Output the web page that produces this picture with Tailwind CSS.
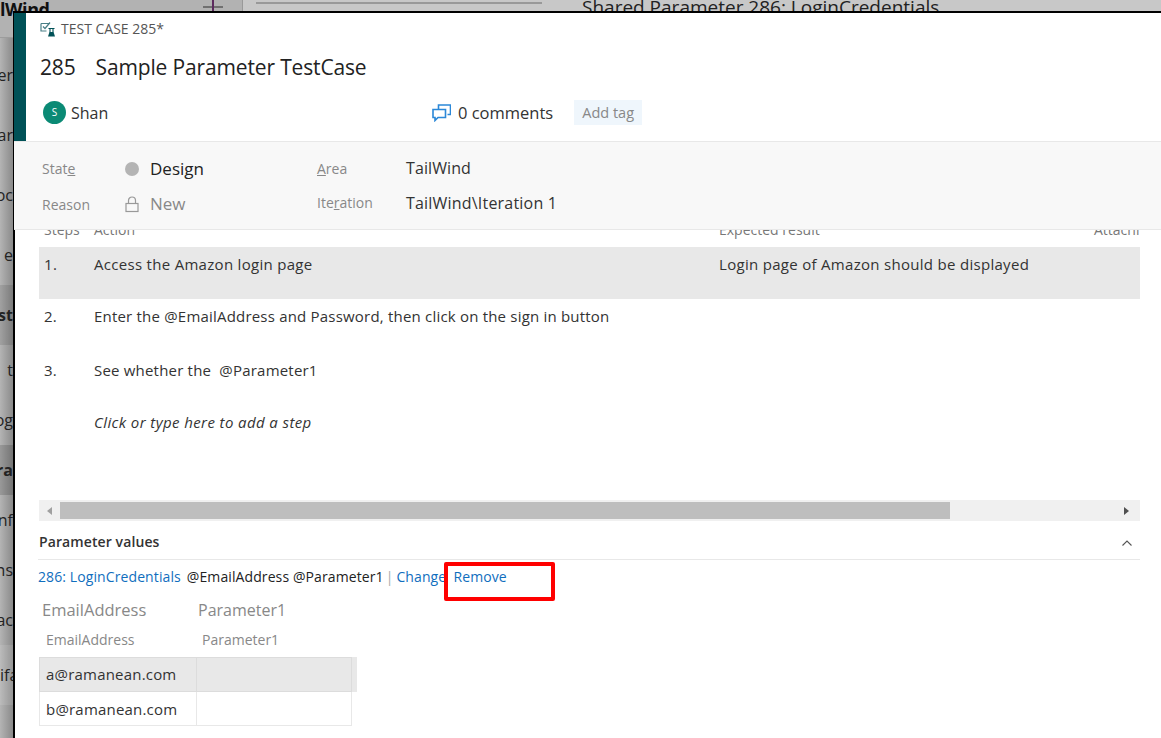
<!DOCTYPE html>
<html>
<head>
<meta charset="utf-8">
<script src="https://cdn.jsdelivr.net/npm/@tailwindcss/browser@4"></script>
</head>
<body class="bg-[#b4b4b4] overflow-hidden font-['Open_Sans','Noto_Sans',sans-serif]">
<div class="relative w-[1161px] h-[738px] overflow-hidden">

  <!-- dimmed page behind the dialog -->
  <div class="absolute inset-0 flex flex-col">
    <div class="flex h-[38px] shrink-0 border-b border-[#9c9c9c]">
      <div class="w-[243px] relative bg-[#b2b2b2] border-r border-[#999]">
        <span class="absolute left-0 -top-[3px] text-[18px] tracking-[-0.4px] font-bold text-[#111] leading-6">lWind</span>
        <span class="absolute left-[203px] top-[6px] w-5 h-[2px] bg-[#707070]"></span>
        <span class="absolute left-[212px] top-0 w-[2px] h-[11px] bg-[#5c2a5e]"></span>
      </div>
      <div class="flex-1 bg-[#c8c8c8] relative">
        <span class="absolute left-[13px] top-[2px] w-[286px] h-[2px] bg-[#999]"></span>
        <span class="absolute left-[339px] -top-[5px] text-[19px] text-[#222] whitespace-nowrap leading-6">Shared Parameter 286: LoginCredentials</span>
      </div>
    </div>
    <div class="w-[13px] flex-1 bg-gradient-to-r from-[#b4b4b4] to-[#8a8a8a] flex flex-col text-[16px] text-[#222] leading-5 overflow-hidden">
      <div class="h-[7px] shrink-0"></div>
      <div class="h-[60px] shrink-0 flex items-center justify-end whitespace-nowrap"><span>er</span></div>
      <div class="h-[60px] shrink-0 flex items-center justify-end whitespace-nowrap"><span>ar</span></div>
      <div class="h-[60px] shrink-0 flex items-center justify-end whitespace-nowrap"><span>oc</span></div>
      <div class="h-[60px] shrink-0 flex items-center justify-end whitespace-nowrap"><span>e</span></div>
      <div class="h-[60px] shrink-0 flex items-center justify-end whitespace-nowrap font-bold bg-black/10"><span>st</span></div>
      <div class="h-[50px] shrink-0 flex items-center justify-end whitespace-nowrap"><span>t</span></div>
      <div class="h-[50px] shrink-0 flex items-center justify-end whitespace-nowrap"><span>og</span></div>
      <div class="h-[50px] shrink-0 flex items-center justify-end whitespace-nowrap font-bold bg-black/15"><span>ra</span></div>
      <div class="h-[50px] shrink-0 flex items-center justify-end whitespace-nowrap"><span>nf</span></div>
      <div class="h-[50px] shrink-0 flex items-center justify-end whitespace-nowrap"><span>ns</span></div>
      <div class="h-[50px] shrink-0 flex items-center justify-end whitespace-nowrap"><span>ac</span></div>
      <div class="h-[60px] shrink-0 flex items-center justify-start whitespace-nowrap bg-white/10"><span>ifa</span></div>
    </div>
  </div>

  <!-- dialog -->
  <div class="absolute left-[13px] top-[11px] w-[1148px] h-[727px] bg-white border-l-2 border-t-2 border-black flex flex-col">

    <div class="h-[128px] flex shrink-0">
      <div class="w-[12px] -ml-px bg-[#005157]"></div>
      <div class="flex-1 relative">
        <div class="flex items-center h-[30px] pl-[14px] pt-[1px] gap-[6px] text-[14px] text-[#555]">
          <svg width="15" height="16" viewBox="0 0 15 16" fill="none">
            <path d="M1 2.500h9M1 2.500v7.500h5.500" stroke="#4a7f86" stroke-width="1.200"/>
            <path d="M3 5.500l2 2 5-6" stroke="#4a7f86" stroke-width="1.300"/>
            <path d="M8.500 7.500h6M10 7.500v4M13 7.500v4" stroke="#005157" stroke-width="1.100"/>
            <path d="M9.500 11h4L15 15.500H8z" fill="#005157"/>
          </svg>
          <span>TEST CASE 285*</span>
        </div>
        <div class="flex h-[49px] items-center pl-[14px] text-[21px] tracking-[-0.15px] text-[#222] gap-[20px]">
          <span>285</span><span>Sample Parameter TestCase</span>
        </div>
        <div class="flex items-center h-[37px] mt-[2px] pl-[17px] relative">
          <span class="w-[23px] h-[23px] rounded-full bg-[#0b8a75] text-white text-[10px] flex items-center justify-center">S</span>
          <span class="ml-[5px] text-[16px] text-[#333]">Shan</span>
          <div class="absolute left-[406px] top-0 h-[37px] flex items-center">
            <svg width="19" height="19" viewBox="0 0 19 19" fill="none" stroke="#2b88d8" stroke-width="1.600">
              <path d="M6.500 6.500V2h12v9.500h-3"/>
              <path d="M1 6.500h12.500v8H6L3 17.500v-3H1z"/>
            </svg>
            <span class="ml-[7px] pt-[2px] text-[16.500px] text-[#333]">0 comments</span>
            <span class="ml-[21px] h-[25px] px-[8px] bg-[#eff6fc] text-[14.500px] text-[#888] flex items-center">Add tag</span>
          </div>
        </div>
      </div>
    </div>

    <!-- fields -->
    <div class="h-[89px] shrink-0 -ml-px bg-[#f8f8f8] border-y border-[#e8e8e8] grid grid-cols-[83px_192px_89px_1fr] grid-rows-[35px_35px] pt-[9px] pl-[28px] items-center relative z-10">
      <span class="text-[14px] text-[#888]">Stat<u>e</u></span>
      <span class="flex items-center text-[17px] text-[#222]"><span class="w-[14px] h-[14px] rounded-full bg-[#b4b4b4] mr-[11px]"></span>Design</span>
      <span class="text-[14px] text-[#888]"><u>A</u>rea</span>
      <span class="text-[16px] tracking-[0.1px] text-[#333] -mt-[2px]">TailWind</span>
      <span class="text-[14px] text-[#888] mt-px">Reason</span>
      <span class="flex items-center text-[17px] text-[#888] mt-px">
        <svg class="mr-[11px]" width="14" height="17" viewBox="0 0 14 17" fill="none" stroke="#999" stroke-width="1.200"><rect x="1" y="7.500" width="12" height="8"/><path d="M3.500 7.500V4.500a3.500 3.500 0 0 1 7 0v3"/></svg>
        New</span>
      <span class="text-[14px] text-[#888] -mt-[2px]">Ite<u>r</u>ation</span>
      <span class="text-[16px] tracking-[0.2px] text-[#333] -mt-[2px]">TailWind\Iteration 1</span>
    </div>

    <!-- steps -->
    <div class="pl-[24px] w-[1125px] box-content shrink-0">
      <div class="h-[18px] -mt-[9px] mb-[8px] flex text-[14px] text-[#777] leading-[18px] overflow-hidden">
        <span class="w-[5px]"></span>
        <span class="w-[50px]">Steps</span>
        <span class="w-[625px]">Action</span>
        <span class="w-[375px]">Expected result</span>
        <span>Attachi</span>
      </div>
      <div class="h-[52px] w-[1101px] bg-[#e8e8e8] flex pt-[6px] text-[15px] tracking-[0.3px] text-[#333]">
        <span class="w-[55px] pl-[5px]">1.</span>
        <span class="w-[625px]">Access the Amazon login page</span>
        <span>Login page of Amazon should be displayed</span>
      </div>
      <div class="h-[52px] flex pt-[6px] text-[15px] tracking-[0.2px] text-[#333]">
        <span class="w-[55px] pl-[5px]">2.</span>
        <span>Enter the @EmailAddress and Password, then click on the sign in button</span>
      </div>
      <div class="h-[52px] flex pt-[8px] text-[15px] tracking-[0.2px] text-[#333]">
        <span class="w-[55px] pl-[5px]">3.</span>
        <span class="whitespace-pre">See whether the  @Parameter1</span>
      </div>
      <div class="h-[97px] flex pt-[8px] text-[15px] tracking-[0.4px] text-[#333] italic">
        <span class="w-[55px]"></span>
        <span>Click or type here to add a step</span>
      </div>
      <!-- scrollbar -->
      <div class="w-[1101px] h-[21px] bg-[#f0f0f0] flex items-center">
        <span class="w-[21px] flex justify-center"><span class="border-y-[4px] border-y-transparent border-r-[5px] border-r-[#a0a0a0]"></span></span>
        <span class="w-[890px] h-[17px] bg-[#bebebe]"></span>
        <span class="flex-1 flex justify-end pr-[11px]"><span class="border-y-[4px] border-y-transparent border-l-[5px] border-l-[#505050]"></span></span>
      </div>
    </div>

    <!-- parameter values -->
    <div class="pl-[23px] w-[1125px] relative">
      <div class="w-[1102px] h-[39px] border-b border-[#e8e8e8] flex items-center justify-between pl-px pt-[2px] text-[14px] tracking-[0.1px] font-semibold text-[#333]">
        <span>Parameter values</span>
        <svg class="mr-[8px] mt-[4px]" width="10" height="6" viewBox="0 0 10 6" fill="none" stroke="#555" stroke-width="1.100"><path d="M.5 5.500 5 1l4.500 4.500"/></svg>
      </div>
      <div class="flex h-[33px] items-center text-[14px] tracking-[0.1px] whitespace-nowrap">
        <span class="text-[#106ebe]">286: LoginCredentials</span>
        <span class="ml-[6px] text-[#222]">@EmailAddress @Parameter1</span>
        <span class="ml-[2px] text-[#aaa]">|</span>
        <span class="ml-[3px] text-[#106ebe] w-[49px] overflow-hidden">Change</span>
        <span class="ml-[8px] text-[#106ebe]">Remove</span>
      </div>
      <div class="flex h-[32px] mt-px items-center pl-[4px] text-[16.500px] text-[#888]">
        <span class="w-[156px]">EmailAddress</span><span class="text-[16px]">Parameter1</span>
      </div>
      <div class="flex h-[27px] items-center pl-[8px] text-[14px] text-[#888]">
        <span class="w-[156px]">EmailAddress</span><span>Parameter1</span>
      </div>
      <div class="mt-[4px] ml-px w-[318px] bg-[#e8e8e8] h-[35px] flex">
        <div class="w-[158px] border border-[#dcdcdc] flex items-center pl-[6px] text-[15px] tracking-[0.2px] text-[#333]">a@ramanean.com</div>
        <div class="w-[155px] border-y border-r border-[#dcdcdc]"></div>
      </div>
      <div class="w-[313px] ml-px h-[34px] flex">
        <div class="w-[158px] border-x border-b border-[#e8e8e8] flex items-center pl-[6px] pt-px text-[15px] tracking-[0.2px] text-[#333]">b@ramanean.com</div>
        <div class="w-[155px] border-r border-b border-[#e8e8e8]"></div>
      </div>
      <!-- annotation over the Remove link -->
      <div class="absolute left-[429px] top-[41px] w-[111px] h-[39px] border-[4px] border-[#ff0000] rounded-[2px]"></div>
    </div>
  </div>
</div>
</body>
</html>
